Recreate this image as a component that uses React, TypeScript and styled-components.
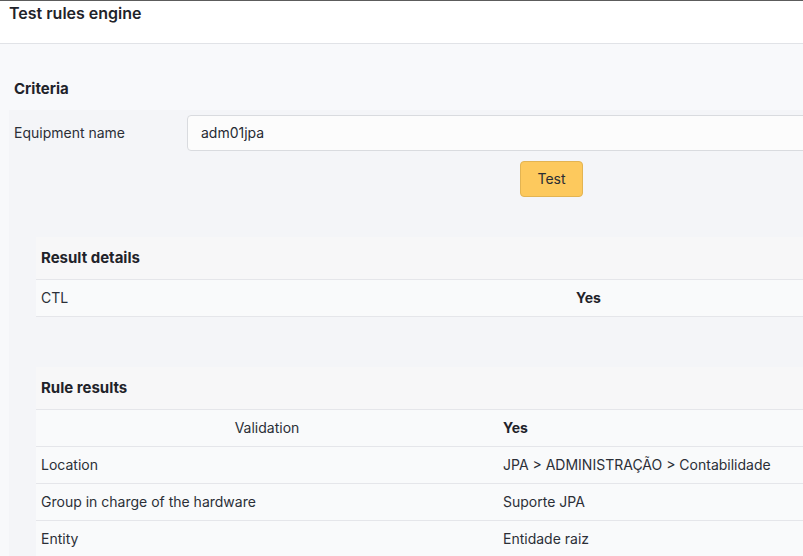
import React from "react";
import styled, { createGlobalStyle } from "styled-components";

const Global = createGlobalStyle`
  html, body { margin: 0; padding: 0; }
  body {
    background: #f8f9fb;
    font-family: Inter, "Noto Sans", "Liberation Sans", sans-serif;
    font-size: 14px;
    color: #272b33;
    overflow: hidden;
    width: 803px;
  }
  * { box-sizing: border-box; }
`;

const Page = styled.div`
  width: 803px;
  height: 556px;
  overflow: hidden;
  display: flex;
  flex-direction: column;
`;

const Header = styled.header`
  background: #ffffff;
  border-top: 1px solid #5c5c5c;
  border-bottom: 1px solid #e1e3e7;
  height: 44px;
  padding: 2px 9px 0;
  flex-shrink: 0;
`;

const Title = styled.h1`
  margin: 0;
  font-size: 16px;
  line-height: 20px;
  font-weight: 600;
  color: #1f232a;
`;

const Main = styled.main`
  display: flex;
  flex-direction: column;
  flex: 1;
`;

const SectionTitle = styled.h2`
  margin: 0;
  height: 66px;
  padding: 35px 0 0 14px;
  font-size: 15px;
  line-height: 20px;
  font-weight: 700;
  color: #1f232a;
`;

const Card = styled.section`
  margin-left: 9px;
  background: #f4f5f8;
  flex: 1;
  display: flex;
  flex-direction: column;
  padding: 5px 0 0 0;
`;

const FormRow = styled.div`
  display: grid;
  grid-template-columns: 173px 1fr;
  align-items: center;
  padding-left: 5px;
`;

const Label = styled.label`
  font-size: 14px;
  color: #2b2f37;
  padding-bottom: 2px;
`;

const Input = styled.input`
  height: 36px;
  width: 700px;
  border: 1px solid #d9dbdf;
  border-radius: 4px;
  background: #fcfcfc;
  padding: 0 13px 2px;
  font: inherit;
  font-size: 14px;
  color: #272b33;
  outline: none;
`;

const ButtonRow = styled.div`
  display: flex;
  padding: 10px 0 0 511px;
`;

const Button = styled.button`
  width: 63px;
  height: 36px;
  background: #fdc95d;
  border: 1px solid #e3b452;
  border-radius: 4px;
  font: inherit;
  font-size: 14px;
  color: #2a2d33;
  padding: 0 0 2px;
  cursor: pointer;
`;

const Block = styled.div<{ $top: number }>`
  margin: ${(p) => p.$top}px 0 0 27px;
  width: 960px;
`;

const BlockHeader = styled.div`
  height: 43px;
  background: #f7f7f8;
  border-bottom: 1px solid #e5e6ea;
  padding: 0 5px 2px;
  display: flex;
  align-items: center;
  font-size: 15px;
  font-weight: 700;
  color: #1f232a;
`;

const Row = styled.div<{ $first: number }>`
  display: grid;
  grid-template-columns: ${(p) => p.$first}px 1fr;
  height: 37px;
  background: #f9fafb;
  border-bottom: 1px solid #e5e6ea;
  align-items: center;
  padding-bottom: 2px;
`;

const Cell = styled.div<{ $bold?: boolean; $center?: boolean }>`
  padding: 0 5px;
  font-size: 14px;
  font-weight: ${(p) => (p.$bold ? 700 : 400)};
  text-align: ${(p) => (p.$center ? "center" : "left")};
  color: ${(p) => (p.$bold ? "#1f232a" : "#2b2f37")};
  white-space: nowrap;
`;

const rules: [string, string][] = [
  ["Location", "JPA > ADMINISTRAÇÃO > Contabilidade"],
  ["Group in charge of the hardware", "Suporte JPA"],
  ["Entity", "Entidade raiz"],
];

export default function App() {
  return (
    <>
      <Global />
      <Page>
        <Header>
          <Title>Test rules engine</Title>
        </Header>
        <Main>
          <SectionTitle>Criteria</SectionTitle>
          <Card>
            <FormRow>
              <Label>Equipment name</Label>
              <Input defaultValue="adm01jpa" />
            </FormRow>
            <ButtonRow>
              <Button>Test</Button>
            </ButtonRow>
            <Block $top={40}>
              <BlockHeader>Result details</BlockHeader>
              <Row $first={535}>
                <Cell>CTL</Cell>
                <Cell $bold>Yes</Cell>
              </Row>
            </Block>
            <Block $top={50}>
              <BlockHeader>Rule results</BlockHeader>
              <Row $first={462}>
                <Cell $center>Validation</Cell>
                <Cell $bold>Yes</Cell>
              </Row>
              {rules.map(([k, v]) => (
                <Row key={k} $first={462}>
                  <Cell>{k}</Cell>
                  <Cell>{v}</Cell>
                </Row>
              ))}
            </Block>
          </Card>
        </Main>
      </Page>
    </>
  );
}
